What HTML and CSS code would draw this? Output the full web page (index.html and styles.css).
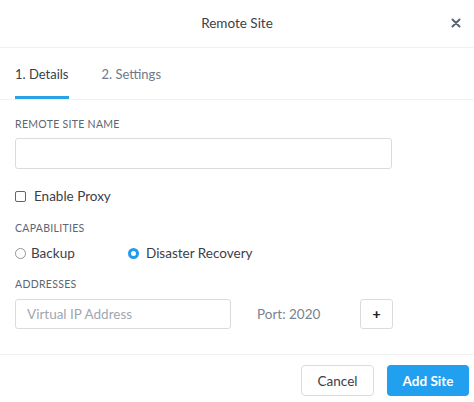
FILE: index.html
```html
<!DOCTYPE html>
<html>
<head>
<meta charset="utf-8">
<link rel="stylesheet" href="styles.css">
</head>
<body>
<div class="dialog">
  <div class="header">
    <span class="title">Remote Site</span>
    <span class="close">
      <svg width="10" height="10" viewBox="0 0 10 10"><path d="M1.5 1.5 L8.5 8.5 M8.5 1.5 L1.5 8.5" stroke="#5b6470" stroke-width="2" stroke-linecap="round"/></svg>
    </span>
  </div>
  <div class="tabs">
    <div class="tab active">1. Details</div>
    <div class="tab">2. Settings</div>
  </div>
  <div class="body">
    <div class="label first">REMOTE SITE NAME</div>
    <div class="input wide"></div>
    <div class="check-row">
      <span class="checkbox"></span>
      <span class="text">Enable Proxy</span>
    </div>
    <div class="label cap">CAPABILITIES</div>
    <div class="radio-row">
      <div class="radio-item backup"><span class="radio"></span><span class="text">Backup</span></div>
      <div class="radio-item"><span class="radio on"></span><span class="text">Disaster Recovery</span></div>
    </div>
    <div class="label addr">ADDRESSES</div>
    <div class="addr-row">
      <div class="input ip"><span class="placeholder">Virtual IP Address</span></div>
      <span class="port">Port: 2020</span>
      <div class="plus">+</div>
    </div>
  </div>
  <div class="footer">
    <div class="btn cancel">Cancel</div>
    <div class="btn primary">Add Site</div>
  </div>
</div>
</body>
</html>
```
FILE: styles.css
```css
* { box-sizing: border-box; }
html, body { margin: 0; padding: 0; background: #fff; }
body { font-family: Lato, "Open Sans", "Liberation Sans", sans-serif; color: #3b4048; }
.dialog { width: 474px; height: 402px; background: #fff; }
.header {
  height: 48px;
  border-bottom: 1px solid #f0f2f4;
  position: relative;
  display: flex; align-items: center; justify-content: center;
}
.title { font-size: 13.5px; color: #3b4048; margin-top: -2px; }
.close { position: absolute; right: 13px; top: 18px; width: 10px; height: 10px; display: flex; }
.tabs {
  height: 52px;
  border-bottom: 1px solid #f0f2f4;
  display: flex; gap: 33px;
  padding-left: 15px;
}
.tab {
  font-size: 13px; color: #6f7987;
  display: flex; align-items: center;
  padding-top: 3px;
  border-bottom: 3px solid transparent;
}
.tab.active { color: #3b4048; border-bottom-color: #2aa3e6; }
.body { padding: 0 15px; }
.label { font-size: 10.5px; color: #5d6673; letter-spacing: 0.3px; line-height: 12px; }
.label.first { margin-top: 18px; }
.input {
  border: 1px solid #d8dce1; border-radius: 3px; background: #fff;
}
.input.wide { margin-top: 8px; width: 377px; height: 31px; }
.check-row { display: flex; align-items: center; margin-top: 20px; height: 14px; }
.checkbox {
  width: 11px; height: 11px; border: 1.5px solid #5e6671; border-radius: 2px;
  margin-right: 8px;
}
.text { font-size: 13.5px; color: #3b4048; }
.label.cap { margin-top: 19px; }
.radio-row { display: flex; align-items: center; margin-top: 12px; height: 14px; }
.radio-item { display: flex; align-items: center; }
.radio-item.backup { width: 113px; }
.radio {
  width: 11px; height: 11px; border-radius: 50%; border: 1px solid #8d949d;
  margin-right: 5px; margin-left: 0;
}
.radio.on { border: 3px solid #1f9bf0; margin-right: 7px; }
.label.addr { margin-top: 18px; }
.addr-row { display: flex; align-items: center; margin-top: 9px; }
.input.ip { width: 216px; height: 30px; display: flex; align-items: center; padding-left: 11px; }
.placeholder { font-size: 13.5px; color: #a0a7b0; }
.port { font-size: 13.5px; color: #7a828d; margin-left: 26px; width: 103px; }
.plus {
  width: 33px; height: 30px; border: 1px solid #d8dce1; border-radius: 3px;
  display: flex; align-items: center; justify-content: center;
  font-size: 14px; font-weight: 900; color: #222; margin-top: -1px;
}
.footer {
  margin-top: 25px;
  border-top: 1px solid #f0f2f4;
  display: flex; justify-content: flex-end; gap: 13px;
  padding: 10px 5px 0 0;
}
.btn {
  height: 31px; border-radius: 4px; font-size: 13.5px;
  display: flex; align-items: center; justify-content: center;
}
.btn.cancel { width: 73px; border: 1px solid #d8dce1; color: #3b4048; background: #fff; }
.btn.primary { width: 82px; background: #22a0f0; color: #fff; font-weight: 700; }
```
